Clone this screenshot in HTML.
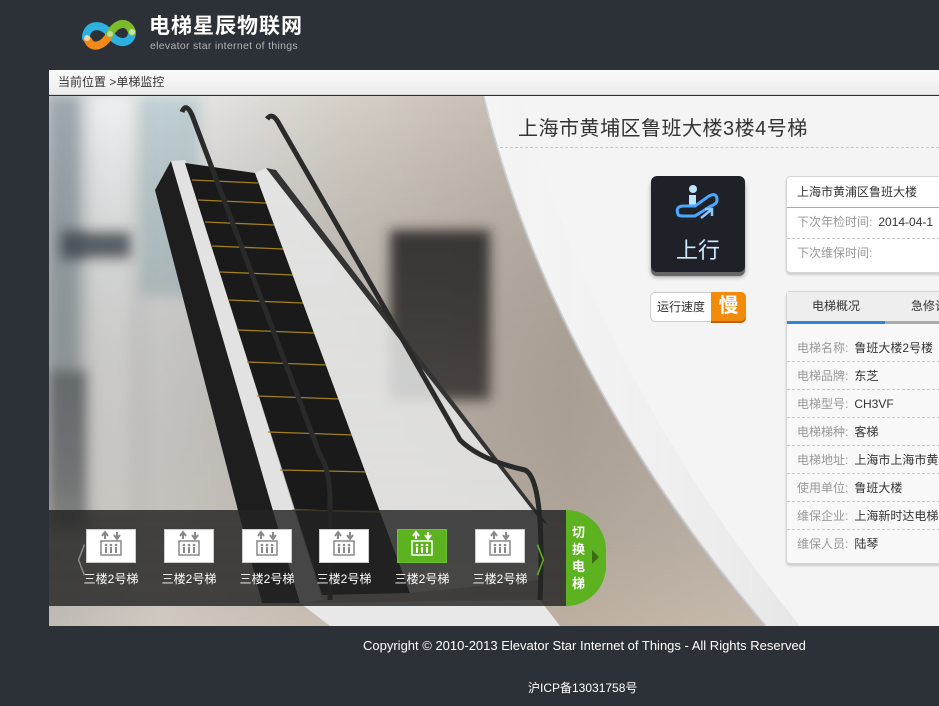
<!DOCTYPE html>
<html><head><meta charset="utf-8"><style>
*{margin:0;padding:0;box-sizing:border-box}
body{width:939px;height:706px;overflow:hidden;background:#2c3137;font-family:"Liberation Sans","Noto Sans CJK SC",sans-serif;position:relative}
.abs{position:absolute}
.crumb{left:49px;top:70px;width:890px;height:25px;background:linear-gradient(#fafafa,#ededed);border-bottom:1px solid #d8d8d8;font-size:12px;color:#333;line-height:24px;padding-left:9px}
.main{left:49px;top:96px;width:890px;height:530px;background:#f4f4f4;overflow:hidden}
.title{left:518px;top:112px;font-size:20px;color:#333;letter-spacing:0.5px}
.dash{left:500px;top:147px;width:439px;border-top:1px dashed #c8c8c8}
.card{background:#fff;border:1px solid #d4d4d4;border-radius:4px;box-shadow:0 2px 2px #ccc}
.row{font-size:12px;color:#333;height:28px;line-height:28px;border-bottom:1px dashed #c8c8c8;padding-left:10px;white-space:nowrap}
.row span{color:#999;margin-right:6px}
.box{width:50px;height:34px;background:#fff;border:1px solid #ccc;top:529px}
.box.on{background:#5cb21f;border-color:#6cc22a}
.lbl{top:570px;font-size:12px;color:#fff;width:70px;text-align:center}
</style></head><body>
<svg class="abs" style="left:80px;top:16px" width="60" height="36" viewBox="0 0 60 36">
<path d="M6 22 C6 8 22 6 30 18 C38 30 52 28 52 16" stroke="#2bb0e0" stroke-width="8" fill="none" stroke-linecap="round"/>
<path d="M8 24 C12 34 24 30 30 18" stroke="#f08a1a" stroke-width="8" fill="none" stroke-linecap="round"/>
<path d="M30 18 C36 6 48 4 52 16" stroke="#7cbb2a" stroke-width="8" fill="none" stroke-linecap="round"/>
<circle cx="7" cy="22" r="3" fill="#fff" opacity=".6"/><circle cx="30" cy="18" r="3" fill="#fff" opacity=".5"/><circle cx="52" cy="16" r="3" fill="#fff" opacity=".6"/>
</svg>
<div class="abs" style="left:149px;top:13px;font-size:21px;line-height:28px;font-weight:bold;color:#fff;letter-spacing:1px">电梯星辰物联网</div>
<div class="abs" style="left:150px;top:40px;font-size:10.5px;line-height:12px;color:#b0b4b8;letter-spacing:0.3px">elevator star internet of things</div>
<div class="abs crumb">当前位置 &gt;单梯监控</div>
<div class="abs main">
<svg class="abs" style="left:0;top:0" width="890" height="530" viewBox="49 96 890 530">
<defs>
<clipPath id="c"><path d="M49 96 L483 96 C515 230 590 420 765 626 L49 626Z"/></clipPath>
<linearGradient id="bg" x1="0" x2="1"><stop offset="0" stop-color="#c8cdd0"/><stop offset=".15" stop-color="#e8eaea"/><stop offset=".4" stop-color="#d6d0c8"/><stop offset=".7" stop-color="#c2b8ad"/><stop offset="1" stop-color="#d8d0c6"/></linearGradient>
<linearGradient id="fl" x1="0" y1="0" x2="0" y2="1"><stop offset="0" stop-color="#000" stop-opacity="0"/><stop offset="1" stop-color="#b8a898" stop-opacity=".5"/></linearGradient>
<linearGradient id="rs" x1="0" x2="1"><stop offset="0" stop-color="#f4f4f4" stop-opacity="0"/><stop offset="1" stop-color="#ddd"/></linearGradient>
<filter id="b"><feGaussianBlur stdDeviation="6"/></filter>
</defs>
<g clip-path="url(#c)">
<rect x="49" y="96" width="740" height="530" fill="url(#bg)"/>
<g filter="url(#b)">
<rect x="49" y="96" width="30" height="400" fill="#8a98a0" opacity=".7"/>
<rect x="90" y="96" width="40" height="420" fill="#f4f6f6" opacity=".8"/>
<rect x="140" y="96" width="60" height="200" fill="#a9c2c8" opacity=".6"/>
<rect x="60" y="230" width="70" height="30" fill="#3c4650" opacity=".8"/>
<rect x="49" y="370" width="40" height="160" fill="#59636a" opacity=".8"/>
<rect x="390" y="230" width="100" height="170" fill="#2e2a28" opacity=".9"/>
</g>
<rect x="49" y="96" width="740" height="530" fill="url(#fl)"/>
<path d="M155 190 L171 161 L300 603 L262 603 Z" fill="#1e1e1e"/>
<path d="M171 161 L185 160 L322 600 L300 603Z" fill="#e2e2e2"/>
<path d="M185 163 L255 173 L410 593 L322 595Z" fill="#1a1a1a"/>
<g stroke="#a08020" stroke-width="1.3">
<line x1="192" y1="180" x2="258" y2="183"/><line x1="198" y1="200" x2="266" y2="203"/><line x1="205" y1="222" x2="274" y2="225"/><line x1="212" y1="246" x2="283" y2="249"/><line x1="220" y1="272" x2="293" y2="275"/><line x1="228" y1="300" x2="303" y2="303"/><line x1="237" y1="330" x2="315" y2="333"/><line x1="247" y1="362" x2="327" y2="365"/><line x1="257" y1="396" x2="340" y2="399"/><line x1="268" y1="432" x2="354" y2="435"/><line x1="280" y1="470" x2="370" y2="472"/><line x1="292" y1="510" x2="386" y2="512"/>
</g>
<path d="M255 173 L266 168 L540 520 L540 580 L410 593Z" fill="#e6e7e7" opacity=".85"/>
<path d="M266 168 L276 170 L548 525 L540 520Z" fill="#333"/>
<path d="M267 119 Q272 112 278 122 L460 440 Q480 460 525 470 Q545 480 540 600" fill="none" stroke="#2a2a2a" stroke-width="5"/>
<path d="M182 112 Q186 102 192 115 L320 455 Q330 470 330 500 L330 600" fill="none" stroke="#2a2a2a" stroke-width="5"/>
<path d="M300 603 L540 600 L560 626 L330 626Z" fill="#e8e8e8"/>
</g>
<path d="M483 96 C515 230 590 420 765 626 L800 626 C640 430 560 240 520 96Z" fill="url(#rs)" opacity=".6"/>
<path d="M483 96 C515 230 590 420 765 626" fill="none" stroke="#bbb" stroke-width="3" opacity=".6"/>
</svg>
<div class="abs" style="left:0;top:414px;width:517px;height:96px;background:rgba(35,35,35,.82)"></div>
<div class="abs" style="left:517px;top:414px;width:40px;height:96px;background:#5cb21f;border-radius:0 40px 40px 0"></div>
<div class="abs" style="left:523px;top:428px;width:14px;font-size:13px;line-height:17px;color:#fff;font-weight:bold">切换电梯</div>
<div class="abs" style="left:543px;top:454px;width:0;height:0;border-left:7px solid #3a6a15;border-top:7px solid transparent;border-bottom:7px solid transparent"></div>
<div class="abs" style="left:10px;top:438px;font-size:34px;color:#888;transform:scaleX(.6)">〈</div>
<div class="abs" style="left:480px;top:438px;font-size:34px;color:#5cb21f;transform:scaleX(.6)">〉</div>
</div>
<div class="abs box" style="left:86px"></div><div class="abs box" style="left:164px"></div><div class="abs box" style="left:242px"></div><div class="abs box" style="left:319px"></div><div class="abs box on" style="left:397px"></div><div class="abs box" style="left:475px"></div>
<svg class="abs" style="left:0;top:0" width="939" height="706">
<defs><g id="ic"><path d="M-6 2 L-6 -4 M-9 -1 L-6 -5 L-3 -1 M6 -5 L6 1 M3 -2 L6 2 L9 -2" stroke="currentColor" stroke-width="2" fill="none"/><rect x="-10" y="4" width="20" height="14" fill="none" stroke="currentColor" stroke-width="1.5"/><g fill="currentColor"><circle cx="-5" cy="8" r="1.3"/><circle cx="0" cy="8" r="1.3"/><circle cx="5" cy="8" r="1.3"/><rect x="-6" y="10" width="2" height="6"/><rect x="-1" y="10" width="2" height="6"/><rect x="4" y="10" width="2" height="6"/></g></g></defs>
<use href="#ic" x="111" y="537" color="#888"/><use href="#ic" x="189" y="537" color="#888"/><use href="#ic" x="267" y="537" color="#888"/><use href="#ic" x="344" y="537" color="#888"/><use href="#ic" x="422" y="537" color="#fff"/><use href="#ic" x="500" y="537" color="#888"/>
</svg>
<div class="abs lbl" style="left:76px">三楼2号梯</div><div class="abs lbl" style="left:154px">三楼2号梯</div><div class="abs lbl" style="left:232px">三楼2号梯</div><div class="abs lbl" style="left:309px">三楼2号梯</div><div class="abs lbl" style="left:387px">三楼2号梯</div><div class="abs lbl" style="left:465px">三楼2号梯</div>
<div class="abs title">上海市黄埔区鲁班大楼3楼4号梯</div>
<div class="abs dash"></div>
<div class="abs" style="left:651px;top:176px;width:94px;height:96px;background:#1e2228;border-radius:6px;box-shadow:0 4px 0 #666,0 5px 4px #999"></div>
<svg class="abs" style="left:651px;top:176px" width="94" height="96">
<circle cx="42" cy="13" r="4" fill="#bfe4ff"/><rect x="38" y="19" width="7" height="12" fill="#bfe4ff"/>
<path d="M27 38 Q24 30 33 30 L44 30 L58 20 Q66 16 66 24 Q66 28 60 30 L44 40 L32 40 Q27 40 27 38Z" fill="none" stroke="#4aa8ff" stroke-width="3"/>
<path d="M50 42 L60 34 M54 33 L61 33 L61 40" stroke="#8cc8ff" stroke-width="2.5" fill="none"/>
<text x="47" y="82" text-anchor="middle" font-size="22" fill="#cfe9ff" font-family="Noto Sans CJK SC,sans-serif">上行</text>
</svg>
<div class="abs" style="left:650px;top:292px;width:96px;height:30px;border:1px solid #ccc;border-radius:5px;background:#fff;font-size:12px;line-height:28px;color:#333;padding-left:6px">运行速度</div>
<div class="abs" style="left:711px;top:292px;width:35px;height:29px;background:#f28a0a;border-radius:0 5px 5px 0;box-shadow:0 2px 0 #c06000;color:#fff;font-size:20px;font-weight:bold;text-align:center;line-height:28px">慢</div>
<div class="abs card" style="left:786px;top:176px;width:170px;height:97px">
<div class="row" style="color:#333;height:31px;line-height:30px;border-bottom:1px solid #aaa">上海市黄浦区鲁班大楼</div>
<div class="row" style="height:31px"><span>下次年检时间:</span>2014-04-1</div>
<div class="row" style="border:none"><span>下次维保时间:</span></div>
</div>
<div class="abs card" style="left:786px;top:291px;width:170px;height:273px;background:#f8f8f8">
<div style="height:32px;background:#eee;border-bottom:3px solid #aaa;position:relative;font-size:12px;color:#333;line-height:29px">
<div style="position:absolute;left:0;width:98px;text-align:center;border-bottom:3px solid #2f86d8;height:32px">电梯概况</div>
<div style="position:absolute;left:124px">急修记</div></div>
<div style="padding-top:10px">
<div class="row"><span>电梯名称:</span>鲁班大楼2号楼</div>
<div class="row"><span>电梯品牌:</span>东芝</div>
<div class="row"><span>电梯型号:</span>CH3VF</div>
<div class="row"><span>电梯梯种:</span>客梯</div>
<div class="row"><span>电梯地址:</span>上海市上海市黄</div>
<div class="row"><span>使用单位:</span>鲁班大楼</div>
<div class="row"><span>维保企业:</span>上海新时达电梯</div>
<div class="row" style="border:none"><span>维保人员:</span>陆琴</div>
</div></div>
<div class="abs" style="left:363px;top:638px;font-size:13px;color:#fff">Copyright © 2010-2013 Elevator Star Internet of Things - All Rights Reserved</div>
<div class="abs" style="left:528px;top:679px;font-size:12px;color:#fff">沪ICP备13031758号</div>
</body></html>
